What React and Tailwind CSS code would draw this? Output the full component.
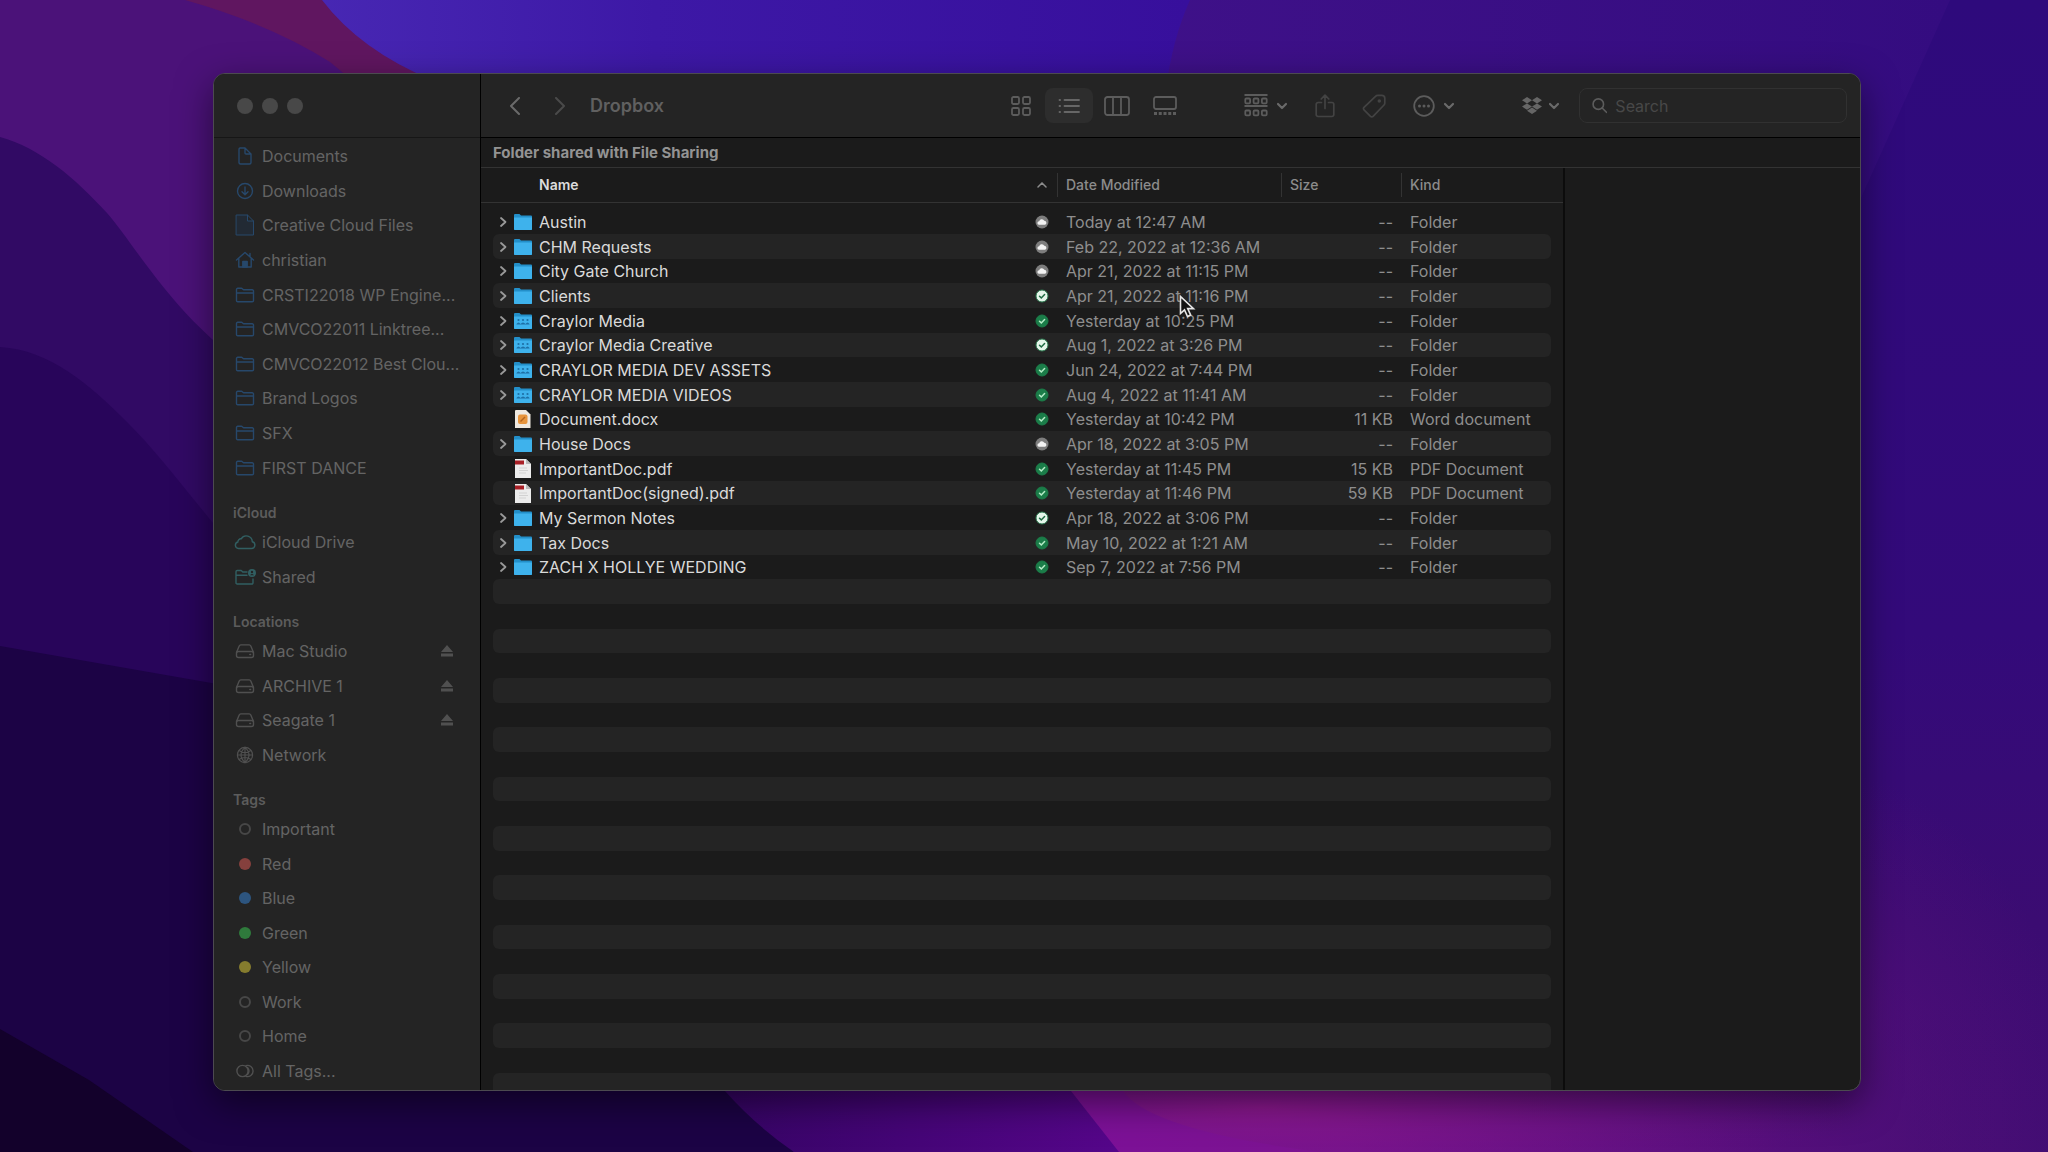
import React, { useState } from "react";
import clsx from "clsx";

const favorites = [
  { name: "Documents", icon: "doc" },
  { name: "Downloads", icon: "download" },
  { name: "Creative Cloud Files", icon: "bigdoc" },
  { name: "christian", icon: "home" },
  { name: "CRSTI22018 WP Engine...", icon: "folder" },
  { name: "CMVCO22011 Linktree...", icon: "folder" },
  { name: "CMVCO22012 Best Clou...", icon: "folder" },
  { name: "Brand Logos", icon: "folder" },
  { name: "SFX", icon: "folder" },
  { name: "FIRST DANCE", icon: "folder" },
];

const icloud = [
  { name: "iCloud Drive", icon: "cloud" },
  { name: "Shared", icon: "shared" },
];

const locations = [
  { name: "Mac Studio", icon: "drive", eject: true },
  { name: "ARCHIVE 1", icon: "drive", eject: true },
  { name: "Seagate 1", icon: "drive", eject: true },
  { name: "Network", icon: "network" },
];

const tags = [
  { name: "Important", dot: "border-2 border-[#474747]" },
  { name: "Red", dot: "bg-[#85403d]" },
  { name: "Blue", dot: "bg-[#2d557f]" },
  { name: "Green", dot: "bg-[#2f7a3c]" },
  { name: "Yellow", dot: "bg-[#857c2e]" },
  { name: "Work", dot: "border-2 border-[#474747]" },
  { name: "Home", dot: "border-2 border-[#474747]" },
  { name: "All Tags...", icon: "alltags" },
];

const files = [
  { name: "Austin", type: "folder", status: "cloud", date: "Today at 12:47 AM", size: "--", kind: "Folder" },
  { name: "CHM Requests", type: "folder", status: "cloud", date: "Feb 22, 2022 at 12:36 AM", size: "--", kind: "Folder" },
  { name: "City Gate Church", type: "folder", status: "cloud", date: "Apr 21, 2022 at 11:15 PM", size: "--", kind: "Folder" },
  { name: "Clients", type: "folder", status: "partial", date: "Apr 21, 2022 at 11:16 PM", size: "--", kind: "Folder" },
  { name: "Craylor Media", type: "team", status: "synced", date: "Yesterday at 10:25 PM", size: "--", kind: "Folder" },
  { name: "Craylor Media Creative", type: "team", status: "partial", date: "Aug 1, 2022 at 3:26 PM", size: "--", kind: "Folder" },
  { name: "CRAYLOR MEDIA DEV ASSETS", type: "team", status: "synced", date: "Jun 24, 2022 at 7:44 PM", size: "--", kind: "Folder" },
  { name: "CRAYLOR MEDIA VIDEOS", type: "team", status: "synced", date: "Aug 4, 2022 at 11:41 AM", size: "--", kind: "Folder" },
  { name: "Document.docx", type: "docx", status: "synced", date: "Yesterday at 10:42 PM", size: "11 KB", kind: "Word document" },
  { name: "House Docs", type: "folder", status: "cloud", date: "Apr 18, 2022 at 3:05 PM", size: "--", kind: "Folder" },
  { name: "ImportantDoc.pdf", type: "pdf", status: "synced", date: "Yesterday at 11:45 PM", size: "15 KB", kind: "PDF Document" },
  { name: "ImportantDoc(signed).pdf", type: "pdf", status: "synced", date: "Yesterday at 11:46 PM", size: "59 KB", kind: "PDF Document" },
  { name: "My Sermon Notes", type: "folder", status: "partial", date: "Apr 18, 2022 at 3:06 PM", size: "--", kind: "Folder" },
  { name: "Tax Docs", type: "folder", status: "synced", date: "May 10, 2022 at 1:21 AM", size: "--", kind: "Folder" },
  { name: "ZACH X HOLLYE WEDDING", type: "folder", status: "synced", date: "Sep 7, 2022 at 7:56 PM", size: "--", kind: "Folder" },
];

// blank striped rows below the last file
const emptyRows = Array.from({ length: 21 });

const Wallpaper = () => (
  <svg
    className="absolute inset-0 h-full w-full"
    viewBox="0 0 2048 1152"
    preserveAspectRatio="none"
    aria-hidden="true"
  >
    <defs>
      <linearGradient id="right" x1="0" y1="0" x2="0" y2="1">
        <stop offset="0" stopColor="#2e0a7c" />
        <stop offset="0.55" stopColor="#330a7a" />
        <stop offset="0.8" stopColor="#3b0c72" />
        <stop offset="1" stopColor="#400d72" />
      </linearGradient>
      <linearGradient id="topBlue" x1="0" y1="0" x2="1" y2="0">
        <stop offset="0.25" stopColor="#4828b4" />
        <stop offset="0.55" stopColor="#3d18a6" />
        <stop offset="1" stopColor="#370f9c" />
      </linearGradient>
      <linearGradient id="topRight" x1="0" y1="0" x2="1" y2="0">
        <stop offset="0" stopColor="#3f1189" />
        <stop offset="1" stopColor="#340c80" />
      </linearGradient>
      <linearGradient id="violet" x1="0" y1="0" x2="1" y2="0">
        <stop offset="0" stopColor="#340463" />
        <stop offset="1" stopColor="#57068c" />
      </linearGradient>
      <linearGradient id="magenta" x1="0" y1="0" x2="1" y2="0">
        <stop offset="0" stopColor="#7c1098" />
        <stop offset="0.3" stopColor="#7c1490" />
        <stop offset="0.75" stopColor="#560f7c" />
        <stop offset="1" stopColor="#400d72" stopOpacity="0" />
      </linearGradient>
      <radialGradient id="pink" cx="0.2" cy="0.6" r="0.8">
        <stop offset="0" stopColor="#8d1890" />
        <stop offset="1" stopColor="#5c107e" stopOpacity="0" />
      </radialGradient>
      <radialGradient id="glow" cx="0.4" cy="1" r="0.7">
        <stop offset="0" stopColor="#5c107e" stopOpacity="0.8" />
        <stop offset="1" stopColor="#5c107e" stopOpacity="0" />
      </radialGradient>
    </defs>
    <rect width="2048" height="1152" fill="url(#right)" />
    <path d="M1100 0H1950L1860 200H1100Z" fill="url(#topRight)" />
    <rect x="1640" y="600" width="408" height="552" fill="url(#glow)" />
    <path d="M0 0H1190Q1172 40 1166 90V300H0Z" fill="url(#topBlue)" />
    <path d="M0 0H322Q360 50 432 80V300H0Z" fill="#601660" />
    <path d="M0 0H185Q270 24 330 62L400 120V500H0Z" fill="#4b1279" />
    <path d="M0 137C40 148 75 178 107 213C135 245 170 310 240 362V600H0Z" fill="#310a64" />
    <path d="M0 347C50 350 90 385 127 422S190 497 240 555V800H0Z" fill="#28055a" />
    <path d="M0 646L240 688V1000H700L794 1152H0Z" fill="#1c0345" />
    <path d="M690 1000L725 1091Q755 1125 794 1152H1140V1000Z" fill="url(#violet)" />
    <path d="M1060 1000L1071 1091L1119 1152H2000V1000Z" fill="url(#magenta)" />
    <path d="M1110 1040L1123 1091Q1150 1130 1319 1152H1860V1040Z" fill="url(#pink)" />
    <path d="M0 1029L89 1080L193 1152H0Z" fill="#13012b" />
  </svg>
);

const SidebarIcon = ({ type }) => {
  const blue = "#27486b";
  const teal = "#315f62";
  const gray = "#505050";
  const common = { width: 22, height: 22, viewBox: "0 0 22 22", fill: "none", strokeWidth: 1.4, strokeLinejoin: "round", strokeLinecap: "round" };

  switch (type) {
    case "doc":
      return (
        <svg {...common} stroke={blue}>
          <path d="M6 3h5l6 6v8.5a1.5 1.5 0 0 1-1.500 1.500h-9A1.500 1.500 0 0 1 5 17.500V4.500A1.500 1.500 0 0 1 6 3zM11 3v5a1 1 0 0 0 1 1h5" />
        </svg>
      );
    case "download":
      return (
        <svg {...common} stroke={blue}>
          <circle cx="11" cy="11" r="7.500" />
          <path d="M11 7v7.500M8 11.800l3 3 3-3" />
        </svg>
      );
    case "bigdoc":
      return (
        <svg {...common} stroke={blue} strokeWidth="1">
          <path d="M2.500 1h11l6 6v14h-17zM13.500 1v6h6" fill="#222a34" />
        </svg>
      );
    case "home":
      return (
        <svg {...common} stroke={blue}>
          <path d="M2.500 11L11 3.500l8.500 7.500M16 7.500V4.500M4.800 9.500V18h12.400V9.500" />
          <path d="M8.800 18v-5.500h4.400V18z" fill={blue} />
        </svg>
      );
    case "folder":
      return (
        <svg {...common} stroke={blue}>
          <path d="M2.500 16.500v-11A1.200 1.200 0 0 1 3.700 4.300h4l1.800 1.500h8.800a1.200 1.200 0 0 1 1.200 1.200v9.500a1.200 1.200 0 0 1-1.200 1.200H3.700a1.200 1.200 0 0 1-1.200-1.200zM2.500 9h17" />
        </svg>
      );
    case "cloud":
      return (
        <svg {...common} stroke={teal}>
          <path d="M4.500 17.500h13a3.400 3.400 0 0 0 .8-6.700A6 6 0 0 0 7.200 7.800 3 3 0 0 0 3.900 11 3.300 3.300 0 0 0 4.500 17.500z" />
        </svg>
      );
    case "shared":
      return (
        <svg {...common} stroke={teal}>
          <path d="M13 6H8.800L7.200 4.500H3.200A1.200 1.200 0 0 0 2 5.700v11A1.200 1.200 0 0 0 3.200 18h14.600a1.200 1.200 0 0 0 1.200-1.200V13M2 9.300h11" />
          <circle cx="18" cy="7" r="4" fill={teal} stroke="none" />
          <circle cx="18" cy="6" r="1.200" fill="#242424" stroke="none" />
          <path d="M16 9.300q2-2.500 4 0z" fill="#242424" stroke="none" />
        </svg>
      );
    case "drive":
      return (
        <svg {...common} stroke={gray}>
          <path d="M2.500 12.500L5.200 6a1.800 1.800 0 0 1 1.700-1.100h8.200A1.800 1.800 0 0 1 16.800 6l2.700 6.500" />
          <rect x="2.500" y="11.500" width="17" height="6" rx="2" />
          <path d="M15.800 14.500h.8" />
        </svg>
      );
    case "network":
      return (
        <svg {...common} stroke={gray} strokeWidth="1.200">
          <circle cx="11" cy="11" r="7.600" />
          <path d="M3.500 11h15M11 3.400v15.200M5 6.500q6 4 12 0M5 15.500q6-4 12 0M11 3.400q-8 7.600 0 15.200M11 3.400q8 7.600 0 15.200" />
        </svg>
      );
    default:
      return (
        <svg {...common} stroke={gray}>
          <circle cx="8.500" cy="11" r="5.600" />
          <path d="M12 5.600a5.600 5.600 0 1 1 0 10.800M13.500 7.500a5.400 5.400 0 0 1 0 7" />
        </svg>
      );
  }
};

const SidebarSection = ({ title, items, height }) => (
  <section>
    {title && (
      <h2 className="flex h-10 items-end pl-[19px] text-sm leading-6 font-semibold text-[#5c5c5c]">
        {title}
      </h2>
    )}
    <ul className={clsx("grid auto-rows-fr", height)}>
      {items.map((item) => (
        <li key={item.name} className="flex items-center pr-[26px] pl-5">
          <a href="#" className="flex flex-1 items-center gap-[6px] text-base leading-6 whitespace-nowrap text-[#646464]">
            <span className="flex w-[22px] shrink-0 justify-center">
              {item.dot ? <span className={clsx("size-3 rounded-full", item.dot)} /> : <SidebarIcon type={item.icon} />}
            </span>
            {item.name}
          </a>
          {item.eject && (
            <button type="button" aria-label={`Eject ${item.name}`}>
              <svg width="14" height="12" viewBox="0 0 14 12" fill="#505050">
                <path d="M7 0l6 7H1zM1 8.500h12v3H1z" />
              </svg>
            </button>
          )}
        </li>
      ))}
    </ul>
  </section>
);

const Caret = () => (
  <svg width="12" height="8" viewBox="0 0 12 8" fill="none" stroke="#6a6a6a" strokeWidth="2.200" strokeLinecap="round" strokeLinejoin="round">
    <path d="M2 2l4 4 4-4" />
  </svg>
);

const viewIcons = {
  icons: (
    <svg width="20" height="20" viewBox="0 0 20 20" fill="none" stroke="#5c5c5c" strokeWidth="1.800">
      <rect x="1" y="1" width="7" height="7" rx="1.500" />
      <rect x="12" y="1" width="7" height="7" rx="1.500" />
      <rect x="1" y="12" width="7" height="7" rx="1.500" />
      <rect x="12" y="12" width="7" height="7" rx="1.500" />
    </svg>
  ),
  list: (
    <svg width="22" height="16" viewBox="0 0 22 16" fill="none" stroke="#666666" strokeWidth="1.800" strokeLinecap="round">
      <path d="M6.500 2H21M6.500 8H21M6.500 14H21M1.500 2h.6M1.500 8h.6M1.500 14h.6" />
    </svg>
  ),
  columns: (
    <svg width="26" height="20" viewBox="0 0 26 20" fill="none" stroke="#5c5c5c" strokeWidth="1.800">
      <rect x="1" y="1" width="24" height="18" rx="2.500" />
      <path d="M9 1v18M17 1v18" />
    </svg>
  ),
  gallery: (
    <svg width="24" height="20" viewBox="0 0 24 20" fill="none" stroke="#5c5c5c" strokeWidth="1.800">
      <rect x="1" y="1" width="22" height="12" rx="2" />
      <path d="M1 17.500h22" strokeWidth="3" strokeDasharray="3 1.750" />
    </svg>
  ),
};

const Toolbar = ({ view, setView }) => (
  <header className="flex h-16 shrink-0 items-center border-b border-black bg-[#242424] pr-[13px] pl-7">
    <button type="button" aria-label="Back">
      <svg width="12" height="18" viewBox="0 0 12 18" fill="none" stroke="#6a6a6a" strokeWidth="2" strokeLinecap="round" strokeLinejoin="round">
        <path d="M10 1L2 9l8 8" />
      </svg>
    </button>
    <button type="button" aria-label="Forward" className="ml-[33px]">
      <svg width="12" height="18" viewBox="0 0 12 18" fill="none" stroke="#4a4a4a" strokeWidth="2" strokeLinecap="round" strokeLinejoin="round">
        <path d="M2 1l8 8-8 8" />
      </svg>
    </button>
    <h1 className="ml-6 text-lg font-semibold text-[#606060]">Dropbox</h1>

    <div className="mr-[55px] ml-auto flex">
      {Object.keys(viewIcons).map((key) => (
        <button
          key={key}
          type="button"
          aria-label={`View as ${key}`}
          onClick={() => setView(key)}
          className={clsx("flex h-[35px] w-12 items-center justify-center rounded-lg", view === key && "bg-[#2d2d2d]")}
        >
          {viewIcons[key]}
        </button>
      ))}
    </div>

    <div className="mr-[67px] flex items-center gap-[27px]">
      <button type="button" aria-label="Group" className="flex items-center gap-2">
        <svg width="24" height="23" viewBox="0 0 24 23" fill="none" stroke="#5c5c5c" strokeWidth="1.800">
          <path d="M0.500 1h23M0.500 12h23" />
          <rect x="1.300" y="4.500" width="4.800" height="4.800" rx="1" />
          <rect x="9.600" y="4.500" width="4.800" height="4.800" rx="1" />
          <rect x="17.900" y="4.500" width="4.800" height="4.800" rx="1" />
          <rect x="1.300" y="16.500" width="4.800" height="4.800" rx="1" />
          <rect x="9.600" y="16.500" width="4.800" height="4.800" rx="1" />
          <rect x="17.900" y="16.500" width="4.800" height="4.800" rx="1" />
        </svg>
        <Caret />
      </button>
      <button type="button" aria-label="Share">
        <svg width="20" height="24" viewBox="0 0 20 24" fill="none" stroke="#434343" strokeWidth="1.700" strokeLinecap="round" strokeLinejoin="round">
          <path d="M6.500 8.500H3A1.800 1.800 0 0 0 1.200 10.300v10.400A1.800 1.800 0 0 0 3 22.500h14a1.800 1.800 0 0 0 1.800-1.800V10.300A1.800 1.800 0 0 0 17 8.500h-3.500M10 14.500V1.500M6.200 5L10 1.200 13.800 5" />
        </svg>
      </button>
      <button type="button" aria-label="Edit tags">
        <svg width="24" height="24" viewBox="0 0 24 24" fill="none" stroke="#434343" strokeWidth="1.700" strokeLinejoin="round">
          <path d="M13.500 2.300L2 13.300a1.800 1.800 0 0 0 0 2.600l6.500 6.500a1.800 1.800 0 0 0 2.600 0L22 11a3 3 0 0 0 .8-2V4.300A3 3 0 0 0 19.800 1.400H15.600a3 3 0 0 0-2.100.9z" />
          <circle cx="17.300" cy="7" r="0.900" fill="#434343" />
        </svg>
      </button>
      <button type="button" aria-label="More actions" className="flex items-center gap-2">
        <svg width="22" height="22" viewBox="0 0 22 22" fill="none" stroke="#5c5c5c" strokeWidth="1.800">
          <circle cx="11" cy="11" r="9.800" />
          <g fill="#5c5c5c" stroke="none">
            <circle cx="6.500" cy="11" r="1.500" />
            <circle cx="11" cy="11" r="1.500" />
            <circle cx="15.500" cy="11" r="1.500" />
          </g>
        </svg>
        <Caret />
      </button>
    </div>

    <button type="button" aria-label="Dropbox menu" className="mr-[19px] flex items-center gap-1.5">
      <svg width="20" height="17" viewBox="0 0 20 17" fill="#666666">
        <path d="M5 0l5 3.200-5 3.200-5-3.200zM15 0l5 3.200-5 3.200-5-3.200zM5 6.400l5 3.200-5 3.200-5-3.200zM15 6.400l5 3.200-5 3.200-5-3.200zM5 13.700l5-3.200 5 3.200-5 3.200z" />
      </svg>
      <Caret />
    </button>

    <label className="flex h-[35px] w-[268px] items-center gap-2 rounded-lg border border-[#313131] px-3">
      <svg width="17" height="17" viewBox="0 0 17 17" fill="none" stroke="#5c5c5c" strokeWidth="1.800" strokeLinecap="round">
        <circle cx="7" cy="7" r="5.800" />
        <path d="M11.300 11.300L16 16" />
      </svg>
      <input
        type="text"
        aria-label="Search"
        placeholder="Search"
        className="w-full bg-transparent text-base text-[#8c8c8c] outline-none placeholder:text-[#484848]"
      />
    </label>
  </header>
);

const FileIcon = ({ type }) => {
  if (type === "docx") {
    return (
      <svg width="18" height="18" viewBox="0 0 18 18">
        <path d="M2 0h10l4.500 4.500V18H1V1a1 1 0 0 1 1-1z" fill="#efe9e0" />
        <rect x="4" y="4.500" width="9.500" height="9.500" rx="2" fill="#e8953c" />
        <path d="M6.500 11.500l4.500-4.500" stroke="#b5651d" strokeWidth="1.500" />
      </svg>
    );
  }
  if (type === "pdf") {
    return (
      <svg width="18" height="19" viewBox="0 0 18 19">
        <path d="M1 0h11l5 5v14H1z" fill="#ececec" />
        <path d="M12 0l5 5h-5z" fill="#b9b9b9" />
        <path d="M1 1.500h9v4H1z" fill="#a82027" />
        <path d="M5 9h8M5 11.500h9M5 14h7" stroke="#d2d2d2" />
      </svg>
    );
  }
  return (
    <svg width="18" height="18" viewBox="0 0 18 18">
      <path d="M0 2a1 1 0 0 1 1-1h4.500l1.500 1.500H17a1 1 0 0 1 1 1V16a1 1 0 0 1-1 1H1a1 1 0 0 1-1-1z" fill="#238fc9" />
      <path d="M0 4.500h18V16a1 1 0 0 1-1 1H1a1 1 0 0 1-1-1z" fill="#3eb2ec" />
      {type === "team" && (
        <g fill="#1d6fa5">
          <circle cx="4.500" cy="8" r="1.100" />
          <circle cx="9" cy="8" r="1.100" />
          <circle cx="13.500" cy="8" r="1.100" />
          <path d="M2.500 12q2-3 4 0q2.500-3 5 0q2-3 4 0v.5h-13z" />
        </g>
      )}
    </svg>
  );
};

const StatusIcon = ({ status }) => {
  if (status === "cloud") {
    return (
      <svg width="14" height="14" viewBox="0 0 14 14" role="img" aria-label="Online only">
        <circle cx="7" cy="7" r="6.500" fill="#7d7d7d" />
        <path d="M4 9.700a1.700 1.700 0 0 1 .2-3.400A2.700 2.700 0 0 1 9.300 5.800 2 2 0 0 1 10 9.700z" fill="#f2f2f2" />
      </svg>
    );
  }
  const synced = status === "synced";
  return (
    <svg width="14" height="14" viewBox="0 0 14 14" role="img" aria-label={synced ? "Synced" : "Available"}>
      <circle cx="7" cy="7" r="6" fill={synced ? "#1b7d49" : "#e4f5ea"} stroke={synced ? "#1b7d49" : "#2c7a50"} />
      <path d="M4.500 7.200l1.800 1.700 3.300-3.400" fill="none" stroke={synced ? "#b5ecc8" : "#1f6b43"} strokeWidth="1.500" strokeLinecap="round" />
    </svg>
  );
};

const rowClass = "group h-[25px] nth-[3n]:h-6";
const cellClass = "p-0 group-even:bg-[#242424]";

const FileTable = () => (
  <table className="w-full table-fixed border-separate border-spacing-0 text-left whitespace-nowrap">
    <colgroup>
      <col className="w-3" />
      <col />
      <col className="w-7" />
      <col className="w-[224px]" />
      <col className="w-[120px]" />
      <col className="w-[150px]" />
      <col className="w-3" />
    </colgroup>
    <thead className="text-sm text-[#8c8c8c]">
      <tr className="h-[35px]">
        <td className="border-b border-[#333333] p-0" />
        <th className="border-b border-[#333333] p-0 pl-[46px] font-semibold text-[#dcdcdc]">Name</th>
        <td className="border-b border-[#333333] p-0 pl-2">
          <svg width="10" height="6" viewBox="0 0 10 6" fill="none" stroke="#8c8c8c" strokeWidth="1.500" strokeLinecap="round">
            <path d="M1 5l4-4 4 4" />
          </svg>
        </td>
        {["Date Modified", "Size", "Kind"].map((label) => (
          <th key={label} className="border-b border-[#333333] p-0 font-medium">
            <div className="h-6 border-l border-[#333333] pl-2 leading-6">{label}</div>
          </th>
        ))}
        <td className="border-b border-[#333333] p-0" />
      </tr>
    </thead>
    <tbody className="text-base leading-6 text-[#8e8e8e] before:block before:h-1.5">
      {files.map((file) => (
        <tr key={file.name} className={rowClass}>
          <td className="p-0" />
          <td className={clsx(cellClass, "rounded-l-md")}>
            <div className="flex items-center gap-[7px] pl-1.5 text-[#dadada]">
              {file.kind === "Folder" ? (
                <button type="button" aria-label={`Expand ${file.name}`}>
                  <svg width="8" height="12" viewBox="0 0 8 12" fill="none" stroke="#999999" strokeWidth="1.800" strokeLinecap="round" strokeLinejoin="round">
                    <path d="M2 2l4.500 4L2 10" />
                  </svg>
                </button>
              ) : (
                <span className="w-2" />
              )}
              <FileIcon type={file.type} />
              {file.name}
            </div>
          </td>
          <td className={clsx(cellClass, "pl-1.5")}>
            <StatusIcon status={file.status} />
          </td>
          <td className={clsx(cellClass, "pl-[9px]")}>{file.date}</td>
          <td className={clsx(cellClass, "pr-2 text-right")}>{file.size}</td>
          <td className={clsx(cellClass, "rounded-r-md pl-[9px]")}>{file.kind}</td>
          <td className="p-0" />
        </tr>
      ))}
      {emptyRows.map((_, i) => (
        <tr key={i} className={rowClass}>
          <td className="p-0" />
          <td colSpan={5} className={clsx(cellClass, "rounded-md")} />
          <td className="p-0" />
        </tr>
      ))}
    </tbody>
  </table>
);

export default function App() {
  const [view, setView] = useState("list");

  return (
    <div className="relative flex h-screen overflow-hidden bg-[#2e0a7c] pt-[73px] pr-[187px] pb-[61px] pl-[213px] font-[Inter,sans-serif]">
      <Wallpaper />

      <div className="relative flex min-w-0 flex-1 overflow-hidden rounded-xl border border-[#4c4a50] bg-[#1b1b1b] shadow-[0_12px_36px_rgba(0,0,0,0.5)]">
        <aside className="flex w-[267px] shrink-0 flex-col border-r border-black bg-[#242424]">
          <div className="flex h-16 shrink-0 items-center gap-[9px] border-b border-[#161616] pl-[23px]">
            <button type="button" aria-label="Close" className="size-4 rounded-full bg-[#484848]" />
            <button type="button" aria-label="Minimize" className="size-4 rounded-full bg-[#484848]" />
            <button type="button" aria-label="Zoom" className="size-4 rounded-full bg-[#484848]" />
          </div>
          <nav className="pt-px">
            <SidebarSection items={favorites} height="h-[346px]" />
            <SidebarSection title="iCloud" items={icloud} height="h-[69px]" />
            <SidebarSection title="Locations" items={locations} height="h-[138px]" />
            <SidebarSection title="Tags" items={tags} height="h-[276px]" />
          </nav>
        </aside>

        <main className="flex min-w-0 flex-1 flex-col">
          <Toolbar view={view} setView={setView} />
          <p className="h-[30px] shrink-0 border-b border-[#333333] pl-3 text-[15px] leading-[29px] font-bold text-[#939393]">
            Folder shared with File Sharing
          </p>
          <div className="flex min-h-0 flex-1">
            <div className="min-w-0 flex-1 overflow-hidden">
              <FileTable />
            </div>
            <div className="w-[297px] shrink-0 border-l-2 border-[#0c0c0c]" />
          </div>
        </main>
      </div>

      {/* mouse pointer */}
      <svg className="pointer-events-none absolute top-[295px] left-[1179px]" width="17" height="24" viewBox="0 0 17 24">
        <path d="M1.500 1.500v17l4-3.700 3 6.700 3.200-1.400-3-6.500h5.800z" fill="#111111" stroke="#e6e6e6" strokeWidth="1.600" />
      </svg>
    </div>
  );
}
